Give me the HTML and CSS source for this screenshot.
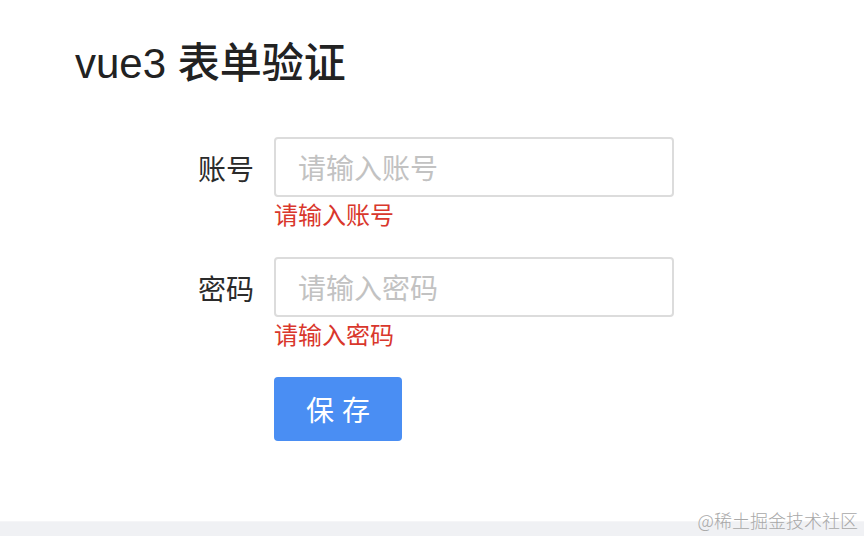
FILE: index.html
```html
<!DOCTYPE html>
<html lang="zh-CN">
<head>
<meta charset="utf-8">
<title>vue3 表单验证</title>
<link rel="stylesheet" href="styles.css">
</head>
<body>
<div class="page">
  <main class="content">
    <h1 class="title">vue3 表单验证</h1>
    <form class="form">
      <div class="form-item">
        <label class="label">账号</label>
        <div class="field">
          <input class="input" type="text" placeholder="请输入账号">
          <div class="error">请输入账号</div>
        </div>
      </div>
      <div class="form-item">
        <label class="label">密码</label>
        <div class="field">
          <input class="input" type="password" placeholder="请输入密码">
          <div class="error">请输入密码</div>
        </div>
      </div>
      <div class="form-item">
        <span class="label"></span>
        <div class="field">
          <button class="btn" type="button">保 存</button>
        </div>
      </div>
    </form>
  </main>
  <footer class="footer">
    <span class="watermark">@稀土掘金技术社区</span>
  </footer>
</div>
</body>
</html>
```

FILE: styles.css
```css
* { box-sizing: border-box; }
html, body { margin: 0; padding: 0; background: #ffffff; }
body {
  font-family: "Liberation Sans", "Noto Sans CJK SC", sans-serif;
  color: #333333;
  width: 864px;
  height: 536px;
  overflow: hidden;
}
.page {
  position: relative;
  height: 536px;
  display: flex;
  flex-direction: column;
}
.content {
  flex: 1;
  padding: 40px 0 0 75px;
}
.title {
  margin: 0;
  font-size: 42px;
  line-height: 48px;
  font-weight: 500;
  color: #222222;
}
.title-latin { font-weight: 400; }
.form {
  margin-top: 49px;
  margin-left: 95px;
  display: flex;
  flex-direction: column;
}
.form-item {
  display: grid;
  grid-template-columns: 84px 400px;
  column-gap: 20px;
  align-items: start;
  height: 120px;
}
.label {
  text-align: right;
  font-size: 28px;
  line-height: 60px;
  padding-top: 4px;
  color: #2b2b2b;
}
.field {
  display: flex;
  flex-direction: column;
  align-items: flex-start;
}
.input {
  width: 400px;
  height: 60px;
  border: 2px solid #dcdcdc;
  border-radius: 4px;
  padding: 5px 22px 0;
  font-family: "Liberation Sans", "Noto Sans CJK SC", sans-serif;
  font-size: 28px;
  color: #333333;
  outline: none;
  background: #ffffff;
}
.input::placeholder { color: #c2c2c2; }
.error {
  margin-top: 4px;
  font-size: 24px;
  line-height: 30px;
  color: #d9372c;
}
.btn {
  width: 128px;
  height: 64px;
  border: none;
  border-radius: 4px;
  background: #4a8ef3;
  color: #ffffff;
  font-family: "Liberation Sans", "Noto Sans CJK SC", sans-serif;
  font-size: 28px;
  padding: 0;
}
.footer {
  height: 15px;
  background: #f0f1f4;
  border-top: 1px solid #f5f5f7;
}
.watermark {
  position: absolute;
  right: 6px;
  bottom: 5px;
  font-size: 18px;
  line-height: 22px;
  color: #a8a8a8;
  font-family: "Noto Sans CJK SC", sans-serif;
  font-weight: 300;
}
```
